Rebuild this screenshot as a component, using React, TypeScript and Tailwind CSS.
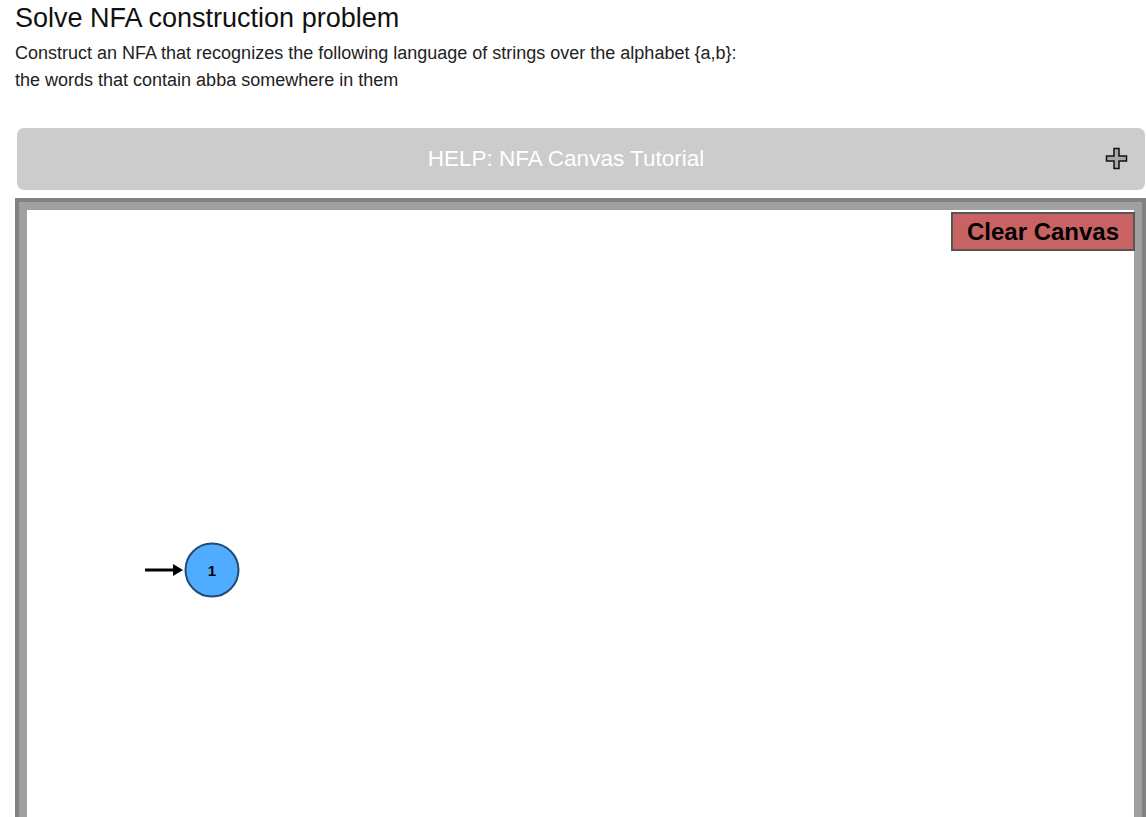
import React from 'react';

// Start state marker drawn on the canvas
function StartNode({ label }: { label: string }) {
  return (
    <svg className="absolute left-[110px] top-[325px]" width="120" height="70" viewBox="0 0 120 70">
      <line x1="8" y1="35" x2="40" y2="35" stroke="#000" strokeWidth="3" />
      <polygon points="36,29 46,35 36,41" fill="#000" />
      <circle cx="75" cy="35" r="26.5" fill="#4facff" stroke="#1f4b76" strokeWidth="2" />
      <text x="75" y="40.5" textAnchor="middle" fontFamily="Liberation Sans, Arial, sans-serif" fontWeight="bold" fontSize="15" fill="#000">
        {label}
      </text>
    </svg>
  );
}

function PlusIcon() {
  return (
    <svg width="24" height="24" viewBox="0 0 24 24">
      <path
        d="M9 1.5h5v7.5h7.5v5H14v7.5H9V14H1.5V9H9z"
        fill="#a8a8a8"
        stroke="#111"
        strokeWidth="1.5"
        strokeLinejoin="miter"
      />
    </svg>
  );
}

export default function App() {
  return (
    <div className="w-[1146px] h-[817px] overflow-hidden bg-white font-['Liberation_Sans',Arial,sans-serif] text-[#222]">
      <div className="pl-[15px] pt-[2px]">
        <h1 className="text-[27px] leading-[32px] text-[#111]">Solve NFA construction problem</h1>
        <p className="mt-[6px] text-[18px] leading-[27px] text-[#222]">
          Construct an NFA that recognizes the following language of strings over the alphabet {'{a,b}'}:
          <br />
          the words that contain abba somewhere in them
        </p>
      </div>

      <div className="ml-[17px] mt-[34px] mr-[1px] h-[62px] rounded-[7px] bg-[#cccccc] flex items-center pr-[16px]">
        <div className="flex-1 pl-[10px] text-center text-[22.5px] text-white">HELP: NFA Canvas Tutorial</div>
        <PlusIcon />
      </div>

      <div className="ml-[15px] mt-[8px] h-[660px] border-4 border-[#828282] bg-[#a0a0a0] p-[8px]">
        <div className="relative h-full bg-white">
          <button className="absolute right-[-1px] top-[2px] w-[184px] h-[39px] bg-[#c96363] border-2 border-[#555] text-[24px] leading-none font-bold text-black">
            Clear Canvas
          </button>
          <StartNode label="1" />
        </div>
      </div>
    </div>
  );
}
